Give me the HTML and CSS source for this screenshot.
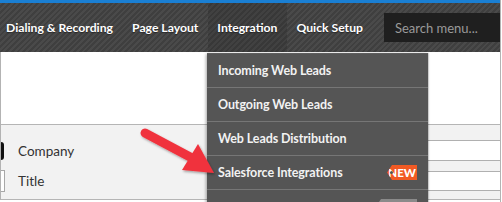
FILE: index.html
```html
<!DOCTYPE html>
<html lang="en">
<head>
<meta charset="utf-8">
<title>Integration menu</title>
<link rel="stylesheet" href="styles.css">
</head>
<body>
<div class="frame">
  <div class="topbar"></div>
  <nav class="nav">
    <a class="nav-item first">Dialing &amp; Recording</a>
    <a class="nav-item">Page Layout</a>
    <a class="nav-item active">Integration</a>
    <a class="nav-item">Quick Setup</a>
    <div class="search">Search menu...</div>
  </nav>
  <main class="content">
    <div class="blank"></div>
    <div class="form">
      <div class="row">
        <span class="mark mark-solid"></span>
        <span class="label">Company</span>
        <span class="input"></span>
      </div>
      <div class="row">
        <span class="mark mark-outline"></span>
        <span class="label">Title</span>
        <span class="input"></span>
      </div>
    </div>
  </main>
  <ul class="dropdown">
    <li class="dd-item">Incoming Web Leads</li>
    <li class="dd-item">Outgoing Web Leads</li>
    <li class="dd-item">Web Leads Distribution</li>
    <li class="dd-item">Salesforce Integrations <span class="badge">NEW</span></li>
    <li class="dd-item"><span class="badge badge-gray"></span></li>
  </ul>
  <svg class="arrow" width="502" height="202" viewBox="0 0 502 202" aria-hidden="true">
    <defs>
      <filter id="sh" x="-20%" y="-20%" width="140%" height="140%">
        <feDropShadow dx="1" dy="1.5" stdDeviation="1.2" flood-color="#000" flood-opacity="0.35"/>
      </filter>
    </defs>
    <g filter="url(#sh)" fill="#f0333d">
      <line x1="145" y1="133" x2="192" y2="158" stroke="#f0333d" stroke-width="9" stroke-linecap="round"/>
      <polygon points="198,144 182,170 214,173"/>
    </g>
  </svg>
</div>
</body>
</html>
```
FILE: styles.css
```css
* { box-sizing: border-box; }
html, body { margin: 0; padding: 0; background: #fff; }
body { width: 502px; height: 202px; overflow: hidden; font-family: Lato, "Liberation Sans", sans-serif; }

.frame {
  position: relative;
  width: 501px;
  height: 202px;
  border-right: 1px solid #b3b3b3;
  overflow: hidden;
}

.topbar { height: 3px; background: #1a7fd3; }

.nav {
  display: flex;
  align-items: center;
  height: 49px;
  background: repeating-linear-gradient(135deg, #4a4a4a 0, #4a4a4a 2px, #3f3f3f 2px, #3f3f3f 4px);
}
.nav-item {
  display: flex;
  align-items: center;
  height: 100%;
  padding: 0 9.5px;
  color: #fff;
  font-weight: 700;
  font-size: 12.2px;
  text-shadow: 0 1px 1px rgba(0,0,0,.4);
  white-space: nowrap;
}
.nav-item.first { padding-left: 6px; }
.nav-item.active {
  background: repeating-linear-gradient(135deg, #414141 0, #414141 2px, #383838 2px, #383838 4px);
}
.search {
  margin-left: 11.5px;
  flex: 1;
  height: 29px;
  background: #1f1f1f;
  color: #9a9a9a;
  font-size: 13px;
  display: flex;
  align-items: center;
  padding-left: 11px;
}

.content { border-left: 1px solid #b3b3b3; }
.blank { height: 73px; border-bottom: 1px solid #b5b5b5; background: #fff; }
.form {
  background: #f2f2f2;
  border-bottom: 1px solid #b5b5b5;
  padding: 15px 0 8px;
  display: flex;
  flex-direction: column;
  gap: 10px;
}
.row { display: flex; align-items: center; height: 21px; }
.row + .row { height: 20px; }
.mark { flex: none; }
.mark-solid { width: 3px; height: 18px; background: #111; border-radius: 0 4px 4px 0; }
.mark-outline { width: 4px; height: 22px; border: 1px solid #a8a8a8; border-left: none; background: #fff; }
.label {
  margin-left: 14px;
  width: 200px;
  color: #333;
  font-size: 13.5px;
}
.row:nth-child(2) .label { margin-left: 13px; }
.input {
  flex: 1;
  height: 100%;
  margin-left: 60px;
  background: #fff;
  border: 1px solid #b0b0b0;
  border-right: none;
}

.dropdown {
  position: absolute;
  left: 207px;
  top: 53px;
  width: 221px;
  margin: 0;
  padding: 0;
  list-style: none;
  background: #555;
  border-top: 1px solid #5e5e5e;
  box-shadow: -1px 1px 3px rgba(0,0,0,.35), 1px 0 1px rgba(0,0,0,.15);
}
.dd-item {
  display: flex;
  align-items: center;
  justify-content: space-between;
  height: 34px;
  padding: 0 11px 0 11px;
  border-bottom: 1px solid #767676;
  color: #f2f2f2;
  font-weight: 700;
  font-size: 12.5px;
  letter-spacing: -0.1px;
  white-space: nowrap;
}
.dd-item:last-child { justify-content: flex-end; align-items: flex-start; padding-top: 9px; }
.badge {
  position: relative;
  width: 30px;
  height: 15px;
  background: #f15a24;
  color: #fff;
  font-size: 11.5px;
  font-weight: 900;
  letter-spacing: 0;
  line-height: 15px;
  display: flex;
  align-items: center;
  justify-content: flex-end;
  padding-right: 1px;
  clip-path: polygon(5px 0, 100% 0, 100% 100%, 5px 100%, 0 50%);
}
.badge::before {
  content: "";
  position: absolute;
  left: 3px;
  top: 6px;
  width: 3px;
  height: 3px;
  border-radius: 50%;
  background: #555;
}
.badge-gray { width: 41px; background: #8a8a8a; }

.arrow { position: absolute; left: 0; top: 0; pointer-events: none; }
```
